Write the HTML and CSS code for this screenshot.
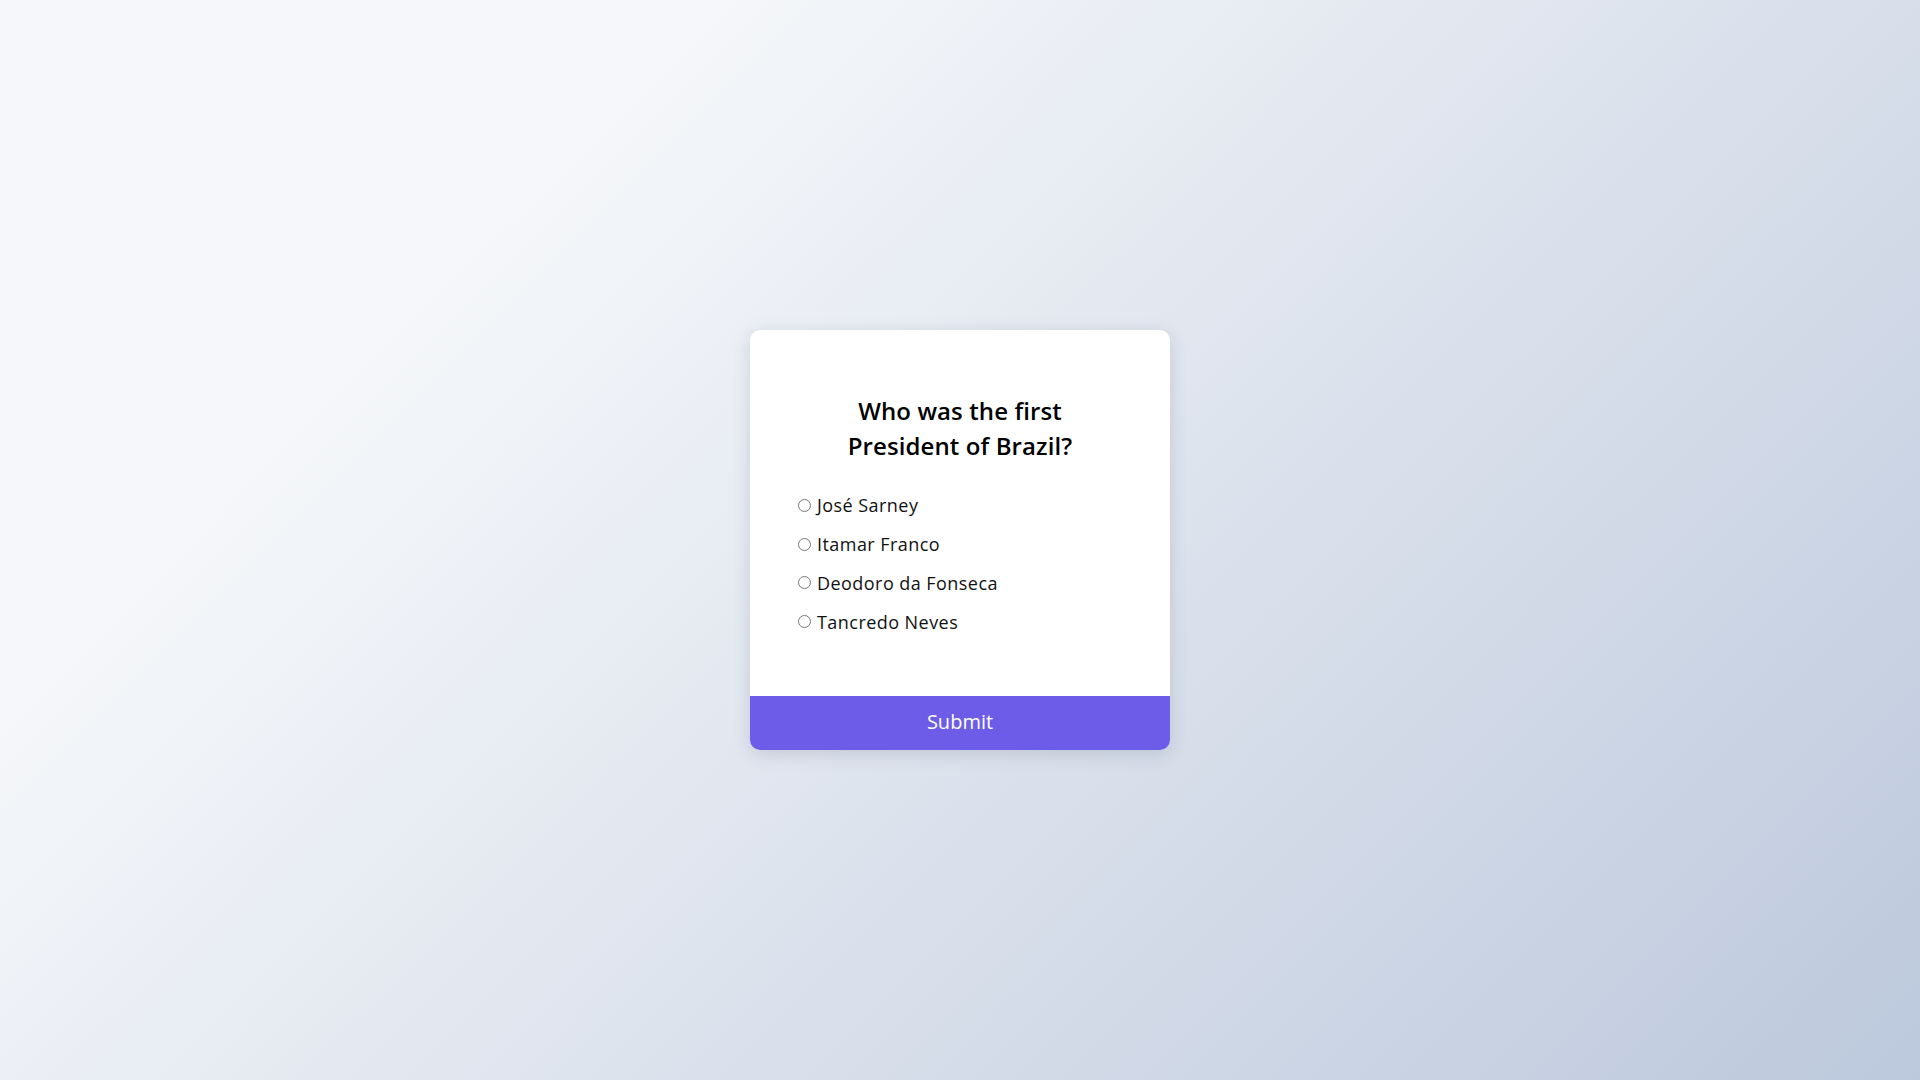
FILE: index.html
```html
<!DOCTYPE html>
<html lang="en">
<head>
<meta charset="utf-8">
<title>Quiz</title>
<link rel="stylesheet" href="styles.css">
</head>
<body>
  <div class="quiz-container">
    <div class="quiz-header">
      <h2 class="question">Who was the first President of Brazil?</h2>
      <ul class="answers">
        <li class="answer"><input type="radio" name="answer" id="a"><label for="a">José Sarney</label></li>
        <li class="answer"><input type="radio" name="answer" id="b"><label for="b">Itamar Franco</label></li>
        <li class="answer"><input type="radio" name="answer" id="c"><label for="c">Deodoro da Fonseca</label></li>
        <li class="answer"><input type="radio" name="answer" id="d"><label for="d">Tancredo Neves</label></li>
      </ul>
    </div>
    <button class="submit" type="button">Submit</button>
  </div>
</body>
</html>
```
FILE: styles.css
```css
* { box-sizing: border-box; }
html, body { margin: 0; height: 100%; }
body {
  font-family: "Open Sans", "Liberation Sans", sans-serif;
  background: linear-gradient(135deg, #f5f7fa 24%, #bcc8dc 100%);
  display: flex;
  align-items: center;
  justify-content: center;
  min-height: 100vh;
}
.quiz-container {
  width: 420px;
  background: #fff;
  border-radius: 10px;
  box-shadow: 0 4px 18px rgba(60, 70, 100, 0.18);
  overflow: hidden;
}
.quiz-header {
  padding: 63px 48px 55px;
}
.question {
  margin: 0 0 23px;
  padding: 0 30px;
  text-align: center;
  font-size: 24px;
  line-height: 35px;
  font-weight: 600;
  color: #000;
  letter-spacing: 0.1px;
}
.answers {
  list-style: none;
  margin: 0;
  padding: 0;
}
.answer {
  height: 38.7px;
  display: flex;
  align-items: center;
  gap: 6px;
  font-size: 18px;
  letter-spacing: 0.45px;
  color: #111;
}
.answer input {
  width: 13px;
  height: 13px;
  margin: 0;
}
.answer label { cursor: pointer; }
.submit {
  display: block;
  width: 100%;
  height: 54px;
  padding: 0 0 3px;
  border: none;
  background: #6c5ce7;
  color: #fff;
  font-family: inherit;
  font-size: 20px;
  cursor: pointer;
}
```
